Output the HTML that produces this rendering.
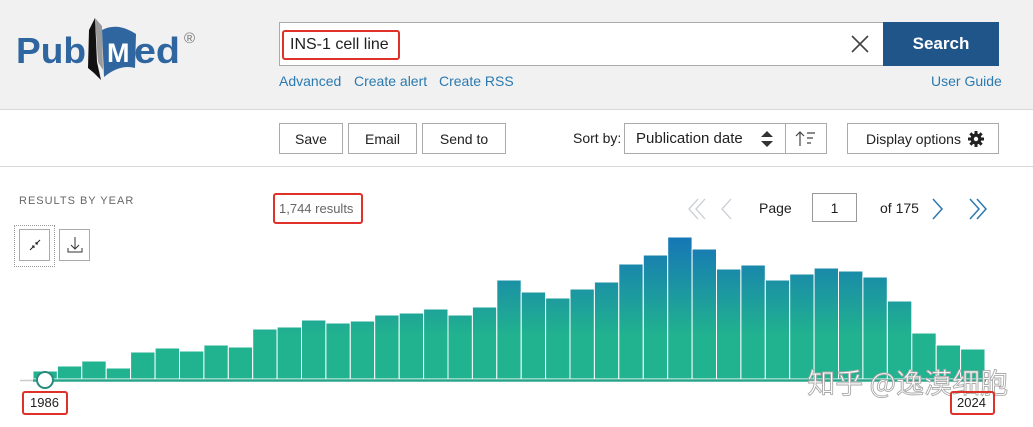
<!DOCTYPE html>
<html><head><meta charset="utf-8"><style>
*{margin:0;padding:0;box-sizing:border-box}
body{width:1033px;height:427px;overflow:hidden;background:#fff;font-family:"Segoe UI","Liberation Sans",sans-serif;position:relative;color:#212121}
.hdr{position:absolute;left:0;top:0;width:1033px;height:110px;background:#f1f1f1;border-bottom:1px solid #d8d8d8}
.abs{position:absolute}
.btn{position:absolute;border:1px solid #aaa;background:#fff;font-size:14px;display:flex;align-items:center;justify-content:center;color:#212121}
.lnk{position:absolute;font-size:14px;color:#2a7ab0}
.red{position:absolute;border:2.5px solid #e0302a;border-radius:3px}
</style></head><body>
<div class="hdr"></div>
<!-- logo -->
<svg class="abs" style="left:0;top:0" width="220" height="90">
<text x="16" y="63" font-family="Liberation Sans,sans-serif" font-weight="bold" font-size="36" fill="#2f66a0" textLength="70" lengthAdjust="spacingAndGlyphs">Pub</text>
<path d="M89 30 L95 18 L97 62 L101 80 L94 73 L88 68 Z" fill="#111"/>
<path d="M95 18 L102 26 L103 70 L98 62 Z" fill="#9a9a9a"/>
<path d="M102 30 Q118 22 136 34 L135 68 Q120 64 104 77 Z" fill="#2f66a0"/>
<text x="107" y="62" font-family="Liberation Sans,sans-serif" font-weight="bold" font-size="27" fill="#fff">M</text>
<text x="134" y="63" font-family="Liberation Sans,sans-serif" font-weight="bold" font-size="36" fill="#2f66a0" textLength="46" lengthAdjust="spacingAndGlyphs">ed</text>
<text x="184" y="43" font-family="Liberation Sans,sans-serif" font-size="15" fill="#777">®</text>
</svg>
<!-- search -->
<div class="abs" style="left:279px;top:22px;width:604px;height:44px;background:#fff;border:1px solid #aaa;border-right:none"></div>
<div class="abs" style="left:290px;top:35px;font-size:16px;line-height:20px">INS-1 cell line</div>
<div class="red" style="left:282px;top:30px;width:118px;height:30px"></div>
<svg class="abs" style="left:850px;top:34px" width="20" height="20"><path d="M2 2L18 18M18 2L2 18" stroke="#444" stroke-width="1.6"/></svg>
<div class="abs" style="left:883px;top:22px;width:116px;height:44px;background:#20558a;color:#fff;font-weight:bold;font-size:17px;display:flex;align-items:center;justify-content:center">Search</div>
<div class="lnk" style="left:279px;top:73px">Advanced</div>
<div class="lnk" style="left:354px;top:73px">Create alert</div>
<div class="lnk" style="left:439px;top:73px">Create RSS</div>
<div class="lnk" style="left:931px;top:73px">User Guide</div>
<!-- toolbar -->
<div class="btn" style="left:279px;top:123px;width:64px;height:31px">Save</div>
<div class="btn" style="left:348px;top:123px;width:69px;height:31px">Email</div>
<div class="btn" style="left:422px;top:123px;width:84px;height:31px">Send to</div>
<div class="abs" style="left:573px;top:130px;font-size:14px">Sort by:</div>
<div class="btn" style="left:624px;top:123px;width:162px;height:31px;justify-content:flex-start;padding-left:11px;font-size:15px">Publication date</div>
<svg class="abs" style="left:760px;top:130px" width="14" height="18"><path d="M7 1L13 7H1Z M7 17L13 11H1Z" fill="#333"/></svg>
<div class="btn" style="left:785px;top:123px;width:42px;height:31px"></div>
<svg class="abs" style="left:795px;top:129px" width="22" height="20"><path d="M5 17V3M1 7L5 3L9 7M12 4H20M12 9H18M12 14H16" stroke="#444" stroke-width="1.2" fill="none"/></svg>
<div class="btn" style="left:847px;top:123px;width:152px;height:31px;justify-content:flex-start;padding-left:18px">Display options</div>
<svg class="abs" style="left:967px;top:130px" width="18" height="18" viewBox="0 0 18 18"><g fill="#222"><circle cx="9" cy="9" r="5.5"/><rect x="7.5" y="1" width="3" height="16"/><rect x="1" y="7.5" width="16" height="3"/><rect x="7.5" y="1" width="3" height="16" transform="rotate(45 9 9)"/><rect x="7.5" y="1" width="3" height="16" transform="rotate(-45 9 9)"/></g><circle cx="9" cy="9" r="2.2" fill="#fff"/></svg>
<div class="abs" style="left:0;top:166px;width:1033px;height:1px;background:#d8d8d8"></div>
<!-- results area -->
<div class="abs" style="left:19px;top:195px;font-size:11px;letter-spacing:1px;color:#666">RESULTS BY YEAR</div>
<div class="abs" style="left:279px;top:201px;font-size:13px;color:#666">1,744 results</div>
<div class="red" style="left:273px;top:193px;width:90px;height:31px"></div>
<svg class="abs" style="left:686px;top:196px" width="320" height="26">
<path d="M12 3L3 13L12 23M19 3L10 13L19 23" stroke="#c8cdd3" stroke-width="1.3" fill="none"/>
<path d="M45 3L36 13L45 23" stroke="#c8cdd3" stroke-width="1.3" fill="none"/>
<path d="M247 3L256 13L247 23" stroke="#2a7ab0" stroke-width="1.5" fill="none"/>
<path d="M284 3L293 13L284 23M291 3L300 13L291 23" stroke="#2a7ab0" stroke-width="1.5" fill="none"/>
</svg>
<div class="abs" style="left:759px;top:200px;font-size:14px">Page</div>
<div class="btn" style="left:812px;top:193px;width:45px;height:29px;border-color:#999">1</div>
<div class="abs" style="left:880px;top:200px;font-size:14px">of 175</div>
<div class="abs" style="left:14px;top:225px;width:41px;height:42px;border:1.5px dotted #999"></div>
<div class="btn" style="left:19px;top:229px;width:31px;height:32px"></div>
<svg class="abs" style="left:27px;top:237px" width="16" height="16"><path d="M3 13L7 9M5 9H7V11M13 3L9 7M9 5V7H11" stroke="#222" stroke-width="1" fill="none"/></svg>
<div class="btn" style="left:59px;top:229px;width:31px;height:32px"></div>
<svg class="abs" style="left:65px;top:235px" width="20" height="20"><path d="M10 2V14M6 10L10 14L14 10M3 13V17H17V13" stroke="#333" stroke-width="1" fill="none"/></svg>
<!-- chart -->
<svg class="abs" style="left:0;top:0" width="1033" height="427">
<defs><linearGradient id="g" gradientUnits="userSpaceOnUse" x1="0" y1="237" x2="0" y2="335"><stop offset="0" stop-color="#1676b6"/><stop offset="1" stop-color="#21b28f"/></linearGradient></defs>
<g fill="url(#g)" stroke="#fff" stroke-width="1" id="bars"></g>
<line x1="20" y1="380.5" x2="33" y2="380.5" stroke="#ccc" stroke-width="1.5"/>
<line x1="33" y1="380.5" x2="986" y2="380.5" stroke="#2aa58c" stroke-width="2.5"/>
<circle cx="45" cy="380" r="8" fill="#fff" stroke="#2a8c7c" stroke-width="2"/>
<text x="1008" y="393" text-anchor="end" font-family="Noto Sans CJK SC,sans-serif" font-size="28" fill="#fff" stroke="#aaa" stroke-width="0.9">知乎 @逸漠细胞</text>
</svg>
<div class="red" style="left:22px;top:391px;width:46px;height:24px"></div>
<div class="abs" style="left:30px;top:395px;font-size:13px">1986</div>
<div class="red" style="left:950px;top:391px;width:45px;height:24px"></div>
<div class="abs" style="left:957px;top:395px;font-size:13px">2024</div>
<script>
var t=[371,366,361,368,352,348,351,345,347,329,327,320,323,321,315,313,309,315,307,280,292,298,289,282,264,255,237,249,269,265,280,274,268,271,277,301,333,345,349];
var g=document.getElementById('bars'),s='',w=(985-33)/39;
for(var i=0;i<t.length;i++){var x=33+i*w;s+='<rect x="'+x.toFixed(1)+'" y="'+t[i]+'" width="'+w.toFixed(1)+'" height="'+(379-t[i])+'"/>';}
g.innerHTML=s;
</script>
</body></html>
